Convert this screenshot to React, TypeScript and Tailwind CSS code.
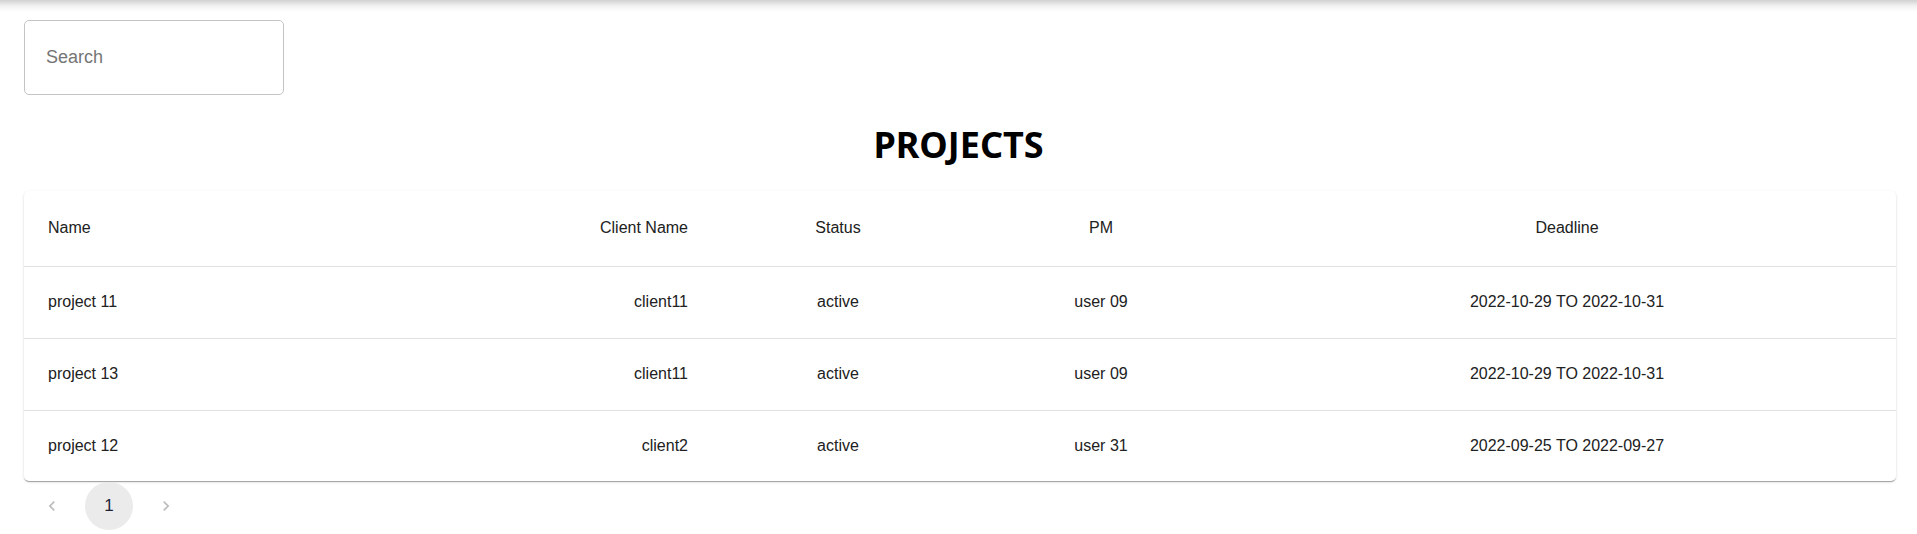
import * as React from 'react';

const rows = [
  { name: 'project 11', client: 'client11', status: 'active', pm: 'user 09', deadline: '2022-10-29 TO 2022-10-31' },
  { name: 'project 13', client: 'client11', status: 'active', pm: 'user 09', deadline: '2022-10-29 TO 2022-10-31' },
  { name: 'project 12', client: 'client2', status: 'active', pm: 'user 31', deadline: '2022-09-25 TO 2022-09-27' },
];

export default function App() {
  return (
    <div className="relative min-h-[534px] bg-white pt-5 font-['Liberation_Sans',Arial,sans-serif] text-[#212121]">
      {/* app bar shadow (bar itself is scrolled off) */}
      <div className="pointer-events-none absolute inset-x-0 top-0 h-3 bg-gradient-to-b from-[rgba(0,0,0,0.18)] via-[rgba(0,0,0,0.05)] to-transparent" />

      {/* Search */}
      <div className="ml-6 flex h-[75px] w-[260px] items-center rounded-[5px] border border-[#c4c4c4] px-[21px]">
        <input
          placeholder="Search"
          className="w-full bg-transparent text-[18px] text-[#212121] outline-none placeholder:text-[#757575]"
        />
      </div>

      <h1 className="mt-8 text-center font-['Noto_Sans',sans-serif] text-[36px] font-bold leading-none text-black">
        PROJECTS
      </h1>

      {/* Table card */}
      <div className="ml-6 mr-[21px] mt-7 overflow-hidden rounded-[5px] bg-white shadow-[0_2px_1px_-1px_rgba(0,0,0,0.2),0_1px_1px_0_rgba(0,0,0,0.14),0_1px_3px_0_rgba(0,0,0,0.12)]">
        <table className="w-full table-fixed border-collapse text-[16px]">
          <colgroup>
            <col className="w-[350px]" />
            <col className="w-[338px]" />
            <col className="w-[252px]" />
            <col className="w-[274px]" />
            <col />
          </colgroup>
          <thead>
            <tr className="h-[75px] border-b border-[#e0e0e0]">
              <th className="px-6 text-left font-normal">Name</th>
              <th className="px-6 text-right font-normal">Client Name</th>
              <th className="px-6 text-center font-normal">Status</th>
              <th className="px-6 text-center font-normal">PM</th>
              <th className="px-6 text-center font-normal">Deadline</th>
            </tr>
          </thead>
          <tbody>
            {rows.map((r, i) => (
              <tr
                key={r.name}
                className={i === rows.length - 1 ? 'h-[71px]' : 'h-[72px] border-b border-[#e0e0e0]'}
              >
                <td className="px-6 text-left">{r.name}</td>
                <td className="px-6 text-right">{r.client}</td>
                <td className="px-6 text-center">{r.status}</td>
                <td className="px-6 text-center">{r.pm}</td>
                <td className="px-6 text-center">{r.deadline}</td>
              </tr>
            ))}
          </tbody>
        </table>
      </div>

      {/* Pagination */}
      <div className="ml-7 mt-px flex items-center gap-[9px]">
        <button className="flex h-12 w-12 items-center justify-center text-[#bdbdbd]" aria-label="Previous page">
          <svg className="h-5 w-5" viewBox="0 0 24 24" fill="currentColor">
            <path d="M15.41 7.41 14 6l-6 6 6 6 1.41-1.41L10.83 12z" />
          </svg>
        </button>
        <button className="flex h-12 w-12 items-center justify-center rounded-full bg-[#ebebeb] text-[17px] text-[#1f1f3a]">
          1
        </button>
        <button className="flex h-12 w-12 items-center justify-center text-[#bdbdbd]" aria-label="Next page">
          <svg className="h-5 w-5" viewBox="0 0 24 24" fill="currentColor">
            <path d="M10 6 8.59 7.41 13.17 12l-4.58 4.59L10 18l6-6z" />
          </svg>
        </button>
      </div>
    </div>
  );
}
